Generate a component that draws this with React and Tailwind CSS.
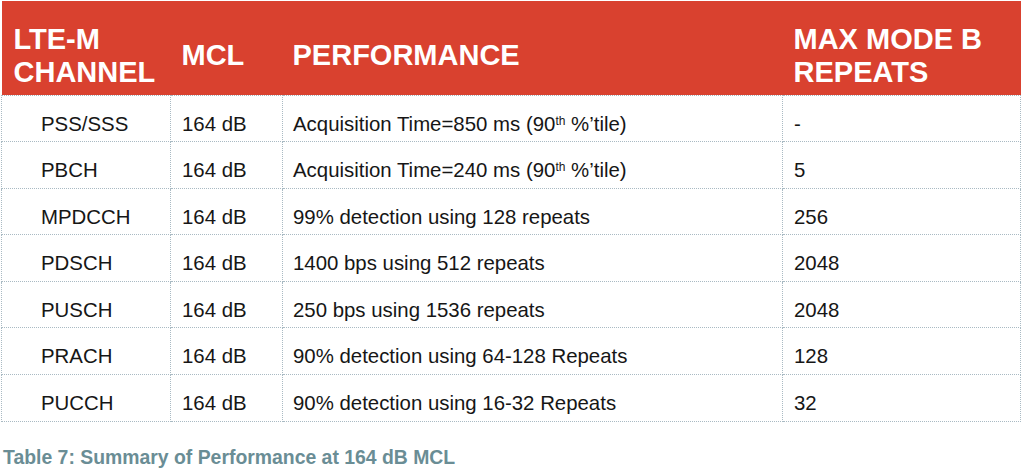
import React from 'react';

const rows = [
  { ch: 'PSS/SSS', mcl: '164 dB', perf: <>Acquisition Time=850 ms (90<sup className="text-[12px] leading-none">th</sup> %’tile)</>, max: '-' },
  { ch: 'PBCH', mcl: '164 dB', perf: <>Acquisition Time=240 ms (90<sup className="text-[12px] leading-none">th</sup> %’tile)</>, max: '5' },
  { ch: 'MPDCCH', mcl: '164 dB', perf: '99% detection using 128 repeats', max: '256' },
  { ch: 'PDSCH', mcl: '164 dB', perf: '1400 bps using 512 repeats', max: '2048' },
  { ch: 'PUSCH', mcl: '164 dB', perf: '250 bps using 1536 repeats', max: '2048' },
  { ch: 'PRACH', mcl: '164 dB', perf: '90% detection using 64-128 Repeats', max: '128' },
  { ch: 'PUCCH', mcl: '164 dB', perf: '90% detection using 16-32 Repeats', max: '32' },
];

export default function App() {
  const cell = 'border border-dotted border-[#a9bac3] h-[46.6px] align-top pt-[16px] pb-0 leading-[24px] text-[20.4px] text-[#161616]';
  const head = 'align-middle pt-[16px] pb-0 leading-[33px] text-[29px] font-bold text-white text-left';

  return (
    <div className="w-[1024px] h-[471px] bg-white pt-px pl-px" style={{ fontFamily: '"Liberation Sans", Arial, sans-serif' }}>
      <table className="w-[1019px] table-fixed border-collapse">
        <colgroup>
          <col className="w-[169px]" />
          <col className="w-[112px]" />
          <col className="w-[500px]" />
          <col className="w-[238px]" />
        </colgroup>
        <thead>
          <tr className="bg-[#d9412f] h-[94px]">
            <th className={`${head} pl-[12px]`}>LTE-M<br />CHANNEL</th>
            <th className={`${head} pl-[11px]`}>MCL</th>
            <th className={`${head} pl-[10px]`}>PERFORMANCE</th>
            <th className={`${head} pl-[11px]`}>MAX MODE B<br />REPEATS</th>
          </tr>
        </thead>
        <tbody>
          {rows.map((r) => (
            <tr key={r.ch}>
              <td className={`${cell} pl-[39px]`}>{r.ch}</td>
              <td className={`${cell} pl-[11px]`}>{r.mcl}</td>
              <td className={`${cell} pl-[10px]`}>{r.perf}</td>
              <td className={`${cell} pl-[11px]`}>{r.max}</td>
            </tr>
          ))}
        </tbody>
      </table>
      <p className="mt-[23px] pl-[2px] text-[19.4px] leading-[24px] font-bold text-[#6a8d95]">
        Table 7: Summary of Performance at 164 dB MCL
      </p>
    </div>
  );
}
